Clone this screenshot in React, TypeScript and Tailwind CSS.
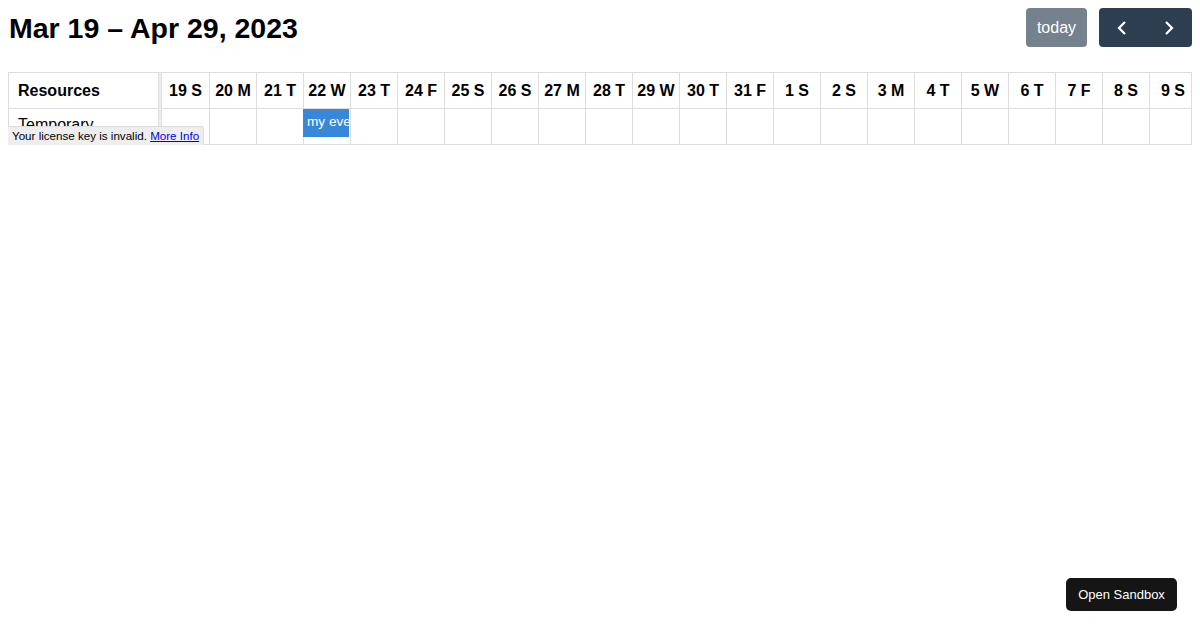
import React from "react";

const days = [
  "19 S", "20 M", "21 T", "22 W", "23 T", "24 F", "25 S", "26 S", "27 M", "28 T", "29 W",
  "30 T", "31 F", "1 S", "2 S", "3 M", "4 T", "5 W", "6 T", "7 F", "8 S", "9 S", "10 M", "11 T",
];

function Chevron({ dir }: { dir: "left" | "right" }) {
  return (
    <svg width="24" height="24" viewBox="0 0 24 24" fill="none" stroke="white" strokeWidth="2.2" strokeLinecap="butt" strokeLinejoin="miter">
      {dir === "left" ? <polyline points="15 6 9 12 15 18" /> : <polyline points="9 6 15 12 9 18" />}
    </svg>
  );
}

export default function App() {
  return (
    <div className="relative w-[1200px] h-[630px] bg-white p-2 text-black overflow-hidden" style={{ fontFamily: '"Liberation Sans", Arial, sans-serif' }}>
      {/* toolbar */}
      <div className="flex justify-between items-center h-[39px] mb-[25px]">
        <h2 className="m-0 text-[28.5px] font-bold leading-[32px] pl-[1px]">Mar 19 – Apr 29, 2023</h2>
        <div className="flex items-center">
          <button className="h-[39px] w-[61px] text-[16px] leading-[24px] text-white bg-[#2c3e50] rounded-[4px] opacity-65">
            today
          </button>
          <div className="flex ml-[12px] bg-[#2c3e50] rounded-[4px] overflow-hidden">
            <button className="h-[39px] w-[46.5px] flex items-center justify-center">
              <Chevron dir="left" />
            </button>
            <button className="h-[39px] w-[46.5px] flex items-center justify-center">
              <Chevron dir="right" />
            </button>
          </div>
        </div>
      </div>

      {/* calendar */}
      <div className="relative flex border border-[#ddd] w-[1184px]">
        {/* resource area */}
        <div className="w-[150px] shrink-0 border-r border-[#ddd] flex flex-col">
          <div className="h-[36px] border-b border-[#ddd] flex items-center pl-[9px] text-[16px] font-bold">Resources</div>
          <div className="h-[35px] pl-[9px] pt-[4px] text-[16px] leading-[24px] overflow-hidden">Temporary</div>
        </div>
        {/* divider */}
        <div className="w-[3px] shrink-0 bg-[#eee] border-r border-[#ddd]" />
        {/* time area */}
        <div className="flex-1 overflow-hidden flex flex-col">
          <div className="flex h-[36px] border-b border-[#ddd]">
            {days.map((d, i) => (
              <div
                key={i}
                className={`${i === 0 ? "w-[48px]" : "w-[47px]"} shrink-0 border-r border-[#ddd] flex items-center justify-center text-[16px] font-bold whitespace-nowrap`}
              >
                {d}
              </div>
            ))}
          </div>
          <div className="relative flex h-[35px]">
            {days.map((d, i) => (
              <div key={i} className={`${i === 0 ? "w-[48px]" : "w-[47px]"} shrink-0 border-r border-[#ddd]`} />
            ))}
            <div className="absolute left-[141px] top-0 w-[46px] h-[28px] bg-[#3788d8] overflow-hidden pl-[4px] pt-[4px] text-[13.6px] leading-[18px] text-white whitespace-nowrap">
              my event
            </div>
          </div>
        </div>

        {/* license message */}
        <div className="absolute left-[-1px] bottom-[-1px] bg-[#eee] border-t border-r border-[#ddd] rounded-tr-[3px] px-[4px] pt-[2px] pb-[2px] text-[11.6px] leading-[14px] text-black whitespace-nowrap">
          Your license key is invalid.{" "}
          <a href="#" className="text-[#0000ee] underline">More Info</a>
        </div>
      </div>

      {/* open sandbox */}
      <button className="absolute right-[23px] bottom-[19px] w-[111px] h-[33px] rounded-[5px] bg-[#151515] text-white text-[13px] flex items-center justify-center">
        Open Sandbox
      </button>
    </div>
  );
}
